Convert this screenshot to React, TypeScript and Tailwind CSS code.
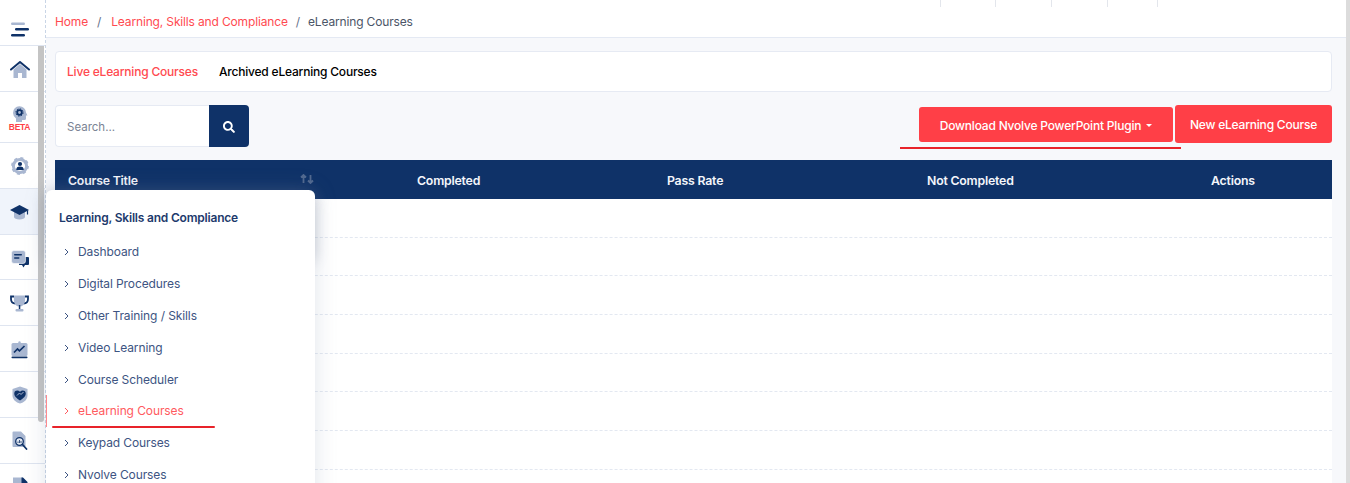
import { FaSearch } from "react-icons/fa";

const LIGHT = "#a9b7d1";
const DARK = "#0f3268";

const menuItems = [
  "Dashboard",
  "Digital Procedures",
  "Other Training / Skills",
  "Video Learning",
  "Course Scheduler",
  "eLearning Courses",
  "Keypad Courses",
  "Nvolve Courses",
];

function IconMenu() {
  return (
    <svg width="20" height="16" viewBox="0 0 20 16">
      <rect x="1" y="0.5" width="14" height="2.4" rx="1.2" fill={LIGHT} />
      <rect x="5" y="6" width="14" height="2.4" rx="1.2" fill={DARK} />
      <rect x="1" y="12" width="14" height="2.4" rx="1.2" fill={DARK} />
    </svg>
  );
}

function IconHome() {
  return (
    <svg width="20" height="18" viewBox="0 0 20 18">
      <path d="M3.5 8.5 10 3l6.500 5.500V17h-4.500v-5H8v5H3.500z" fill={LIGHT} />
      <path d="M1 8.5 10 1l9 7.500" fill="none" stroke={DARK} strokeWidth="2" strokeLinecap="round" strokeLinejoin="round" />
    </svg>
  );
}

function IconHead() {
  return (
    <svg width="16" height="16" viewBox="0 0 16 16">
      <path d="M1 7a6.500 6.500 0 0 1 13 -.5l1.500 3h-1.500v3a1.500 1.500 0 0 1-1.500 1.500H10v2H4v-3.500A7 7 0 0 1 1 7z" fill={LIGHT} />
      <circle cx="7.500" cy="6.500" r="2.300" fill="none" stroke={DARK} strokeWidth="1.800" />
      <circle cx="7.500" cy="6.500" r="3.600" fill="none" stroke={DARK} strokeWidth="1" strokeDasharray="1.400 1.400" />
    </svg>
  );
}

function IconGearUser() {
  return (
    <svg width="18" height="18" viewBox="0 0 18 18">
      <circle cx="9" cy="9" r="6.600" fill="#ffffff" stroke={LIGHT} strokeWidth="3" />
      <circle cx="9" cy="9" r="8" fill="none" stroke={LIGHT} strokeWidth="1.800" strokeDasharray="3 3.300" />
      <circle cx="9" cy="7" r="2.100" fill={DARK} />
      <path d="M5.200 13a3.800 3.400 0 0 1 7.600 0z" fill={DARK} />
    </svg>
  );
}

function IconCap() {
  return (
    <svg width="19" height="16" viewBox="0 0 19 16">
      <path d="M4 7v6c0 1.500 2.500 2.500 5.500 2.500S15 14.500 15 13V7z" fill={LIGHT} />
      <path d="M9.500 1 19 6l-9.500 5L0 6z" fill={DARK} />
      <path d="M17.500 6.500v4" stroke={DARK} strokeWidth="1.200" />
    </svg>
  );
}

function IconChat() {
  return (
    <svg width="18" height="18" viewBox="0 0 18 18">
      <path d="M8 7h9a1 1 0 0 1 1 1v6a1 1 0 0 1-1 1h-3l-1.500 2.500-1.500-2.500H8z" fill={DARK} />
      <rect x="0.500" y="0.500" width="14" height="13" rx="2.500" fill={LIGHT} stroke="#ffffff" strokeWidth="0.600" />
      <rect x="3" y="4" width="8" height="1.400" rx="0.700" fill={DARK} />
      <rect x="3" y="7.300" width="5.500" height="1.400" rx="0.700" fill={DARK} />
    </svg>
  );
}

function IconTrophy() {
  return (
    <svg width="19" height="17" viewBox="0 0 19 17">
      <path d="M4 1.500H1v2.500c0 3 2 4.500 4.500 4.500M15 1.500h3v2.500c0 3-2 4.500-4.500 4.500" fill="none" stroke={DARK} strokeWidth="1.800" />
      <path d="M4 0.500h11v5.500a5.500 5.500 0 0 1-11 0z" fill={LIGHT} />
      <rect x="8.800" y="10" width="1.500" height="4.500" fill={DARK} />
      <rect x="5.500" y="14" width="8" height="2.600" rx="1" fill={LIGHT} />
    </svg>
  );
}

function IconChart() {
  return (
    <svg width="17" height="18" viewBox="0 0 17 18">
      <rect x="0.500" y="2" width="16" height="13" rx="1.500" fill={LIGHT} />
      <circle cx="8.500" cy="1.500" r="1.200" fill={LIGHT} />
      <path d="M3 11.500 6.500 8l2 1.800L13.500 5" fill="none" stroke={DARK} strokeWidth="1.700" />
      <rect x="0.500" y="15.500" width="16" height="1.700" rx="0.800" fill={DARK} />
    </svg>
  );
}

function IconShield() {
  return (
    <svg width="16" height="18" viewBox="0 0 16 18">
      <path d="M8 0.500 15.500 3v6.500C15.500 13.500 12 16.500 8 17.500 4 16.500.5 13.500.5 9.500V3z" fill={LIGHT} />
      <path d="M8 14.500C5 12.500 1.800 10 2.300 7 2.800 4.300 6 3.800 8 5.800c2-2 5.200-1.500 5.700 1.200.5 3-2.700 5.500-5.700 7.500z" fill={DARK} />
      <path d="M5 9.500l2.500-2.500 1.500 1.500L11.500 6" fill="none" stroke={LIGHT} strokeWidth="1" />
    </svg>
  );
}

function IconDocSearch() {
  return (
    <svg width="16" height="19" viewBox="0 0 16 19">
      <path d="M0.500 1.500a1 1 0 0 1 1-1H9l4.500 4.500v10a1 1 0 0 1-1 1h-11a1 1 0 0 1-1-1z" fill={LIGHT} />
      <circle cx="7.500" cy="10.500" r="3.800" fill="#e4e9f2" stroke={DARK} strokeWidth="1.300" />
      <path d="M10.500 13.500 14.500 18" stroke={DARK} strokeWidth="1.800" strokeLinecap="round" />
      <path d="M6 12v-1.500M7.500 12V9M9 12v-2" stroke={DARK} strokeWidth="0.800" />
    </svg>
  );
}

function IconDoc() {
  return (
    <svg width="16" height="19" viewBox="0 0 16 19">
      <path d="M1 0.500h9.500l4.500 4.500v13.500H1z" fill={LIGHT} />
      <path d="M9.500 0.500h1.500l4.500 4.500v1.500H9.500z" fill={DARK} />
    </svg>
  );
}

function SideRow({ h, pt, active, children }: { h: string; pt?: string; active?: boolean; children: React.ReactNode }) {
  return (
    <div className={`${h} ${pt ?? ""} ${active ? "bg-[#f0f4fb]" : ""} flex shrink-0 flex-col items-center justify-center border-b border-[#dfe5f0] pr-[6px]`}>
      {children}
    </div>
  );
}

function Sidebar() {
  return (
    <aside className="relative w-[46px] shrink-0 border-r border-dashed border-[#c9d5e6] bg-white">
      <div className="flex h-[46px] items-center justify-center border-b border-[#dfe5f0] pr-[6px] pt-[15px]">
        <IconMenu />
      </div>
      <SideRow h="h-[46px]" pt="pt-[3px]"><IconHome /></SideRow>
      <SideRow h="h-[51px]" pt="pt-[3px]">
        <IconHead />
        <span className="mt-[1px] text-[8.500px] leading-[9px] font-bold tracking-[-0.300px] text-[#ff3f47] [font-family:'Liberation_Sans',sans-serif]">BETA</span>
      </SideRow>
      <SideRow h="h-[46px]"><IconGearUser /></SideRow>
      <SideRow h="h-[46px]" active><IconCap /></SideRow>
      <SideRow h="h-[45px]" pt="pt-[3px]"><IconChat /></SideRow>
      <SideRow h="h-[46px]" pt="pt-[2px]"><IconTrophy /></SideRow>
      <SideRow h="h-[46px]" pt="pt-[3px]"><IconChart /></SideRow>
      <SideRow h="h-[46px]"><IconShield /></SideRow>
      <SideRow h="h-[46px]"><IconDocSearch /></SideRow>
      <SideRow h="h-[46px]"><IconDoc /></SideRow>
      {/* sidebar scrollbar */}
      <div className="absolute left-[38px] top-[46px] h-[376px] w-[6px] rounded-b-[3px] bg-[#c4c4c4]" />
    </aside>
  );
}

function FlyoutMenu() {
  return (
    <>
      {/* faint shadow of the item behind the flyout */}
      <div className="absolute left-[46px] top-[190px] z-10 h-[70px] w-[269px] rounded-[8px] shadow-[0_2px_14px_rgba(90,100,125,0.3)]" />
      <div className="absolute left-[46px] top-[190px] z-10 h-[320px] w-[269px] rounded-t-[6px] bg-white pl-[13px] pt-[20px] shadow-[0_0_22px_rgba(120,135,165,0.22)]">
        <div className="text-[12px] leading-[16px] font-semibold tracking-[-0.200px] text-[#1d3a6c]">
          Learning, Skills and Compliance
        </div>
        <ul className="mt-[10px]">
          {menuItems.map((item) => {
            const active = item === "eLearning Courses";
            return (
              <li key={item} className={`flex h-[31.900px] items-center text-[12px] tracking-[-0.100px] ${active ? "text-[#ff5a60]" : "text-[#3d5482]"}`}>
                <svg width="5" height="8" viewBox="0 0 5 8" className="mr-[9px] ml-[5px]">
                  <path d="M1 1l3 3-3 3" fill="none" stroke={active ? "#ff5a60" : "#3d5482"} strokeWidth="1" />
                </svg>
                {item}
              </li>
            );
          })}
        </ul>
        <div className="absolute left-0 top-[205px] h-[32px] w-[1px] bg-[#ff8a8e]" />
        <div className="absolute left-[6px] top-[236px] h-[2px] w-[163px] rounded-full bg-[#e8232a]" />
      </div>
    </>
  );
}

const rowCount = [0, 1, 2, 3, 4, 5, 6, 7];

export default function App() {
  return (
    <div className="relative flex h-[483px] w-[1350px] overflow-hidden bg-white text-[12px] [font-family:Inter,sans-serif]">
      <Sidebar />
      <main className="min-w-0 flex-1 pr-[4px]">
        {/* top header, mostly cut off */}
        <div className="flex h-[7px] justify-end bg-white pr-[188px] shadow-[0_1px_4px_rgba(60,70,90,0.18)]">
          <div className="w-[55px] border-l border-[#e3e6ec]" />
          <div className="w-[56px] border-l border-[#e3e6ec]" />
          <div className="w-[56px] border-l border-[#e3e6ec]" />
          <div className="w-[51px] border-l border-[#e3e6ec] border-r" />
        </div>
        <div className="flex h-[31px] items-center border-b border-[#e4e9f3] bg-white pl-[9px] text-[12px] tracking-[-0.150px]">
          <span className="text-[#ff4a50]">Home</span>
          <span className="ml-[9px] mr-[10px] text-[#66708a]">/</span>
          <span className="text-[#ff4a50]">Learning, Skills and Compliance</span>
          <span className="mx-[8px] text-[#66708a]">/</span>
          <span className="text-[#4b5567]">eLearning Courses</span>
        </div>
        <div className="h-[445px] bg-[#f7f8fb] pl-[9px] pr-[14px] pt-[13px]">
          <div className="flex h-[41px] items-center gap-[21px] rounded-[4px] border border-[#e6eaf3] bg-white pl-[11px] text-[12px] font-medium tracking-[-0.200px]">
            <span className="text-[#ff4a50]">Live eLearning Courses</span>
            <span className="text-black">Archived eLearning Courses</span>
          </div>
          <div className="mt-[13px] flex h-[42px] items-start justify-between">
            <div className="flex h-[42px] w-[194px]">
              <div className="flex w-[154px] items-center rounded-l-[4px] border border-r-0 border-[#e6eaf3] bg-white pl-[11px] pt-[3px] text-[11.500px] text-[#7b8494]">
                Search...
              </div>
              <div className="flex w-[40px] items-center justify-center rounded-r-[4px] bg-[#0f3268] pt-[2px]">
                <FaSearch size={12} className="text-white" />
              </div>
            </div>
            <div className="relative flex items-start gap-[2px]">
              <button className="mt-[2px] flex h-[35px] w-[254px] items-center justify-center gap-[5px] rounded-[3px] bg-[#ff3f47] pt-[2px] text-[12px] font-medium tracking-[-0.200px] text-white">
                Download Nvolve PowerPoint Plugin
                <span className="h-0 w-0 border-x-[3px] border-t-[3px] border-x-transparent border-t-white" />
              </button>
              <button className="h-[38px] w-[157px] rounded-[3px] bg-[#ff3f47] pt-[2px] text-[12px] font-medium tracking-[-0.200px] text-white">
                New eLearning Course
              </button>
              <div className="absolute left-[-19px] top-[42px] h-[2px] w-[281px] bg-[#e8232a]" />
            </div>
          </div>
          <div className="mt-[13px] grid h-[39px] grid-cols-[349px_250px_260px_284px_134px] items-center bg-[#0f3268] text-[12.300px] font-semibold tracking-[-0.200px] text-[#f4f6fb]">
            <div className="relative pl-[13px] pt-[4px]">
              Course Title
              <svg width="14" height="10" viewBox="0 0 14 10" className="absolute left-[245px] top-[6px]">
                <path d="M3.500 9V1M1 3.500 3.500 1 6 3.500M10.500 1v8M8 6.500 10.500 9 13 6.500" fill="none" stroke="#51698f" strokeWidth="1.800" />
              </svg>
            </div>
            <div className="pl-[13px] pt-[4px]">Completed</div>
            <div className="pl-[13px] pt-[4px]">Pass Rate</div>
            <div className="pl-[13px] pt-[4px]">Not Completed</div>
            <div className="pl-[13px] pt-[4px]">Actions</div>
          </div>
          <div className="bg-white">
            {rowCount.map((row) => (
              <div key={row} className="h-[38.700px] border-b border-dashed border-[#e3e8f1]" />
            ))}
          </div>
        </div>
      </main>
      {/* page scrollbar */}
      <div className="absolute right-0 top-0 h-full w-[4px] bg-[#dcdcdc]" />
      <FlyoutMenu />
    </div>
  );
}
